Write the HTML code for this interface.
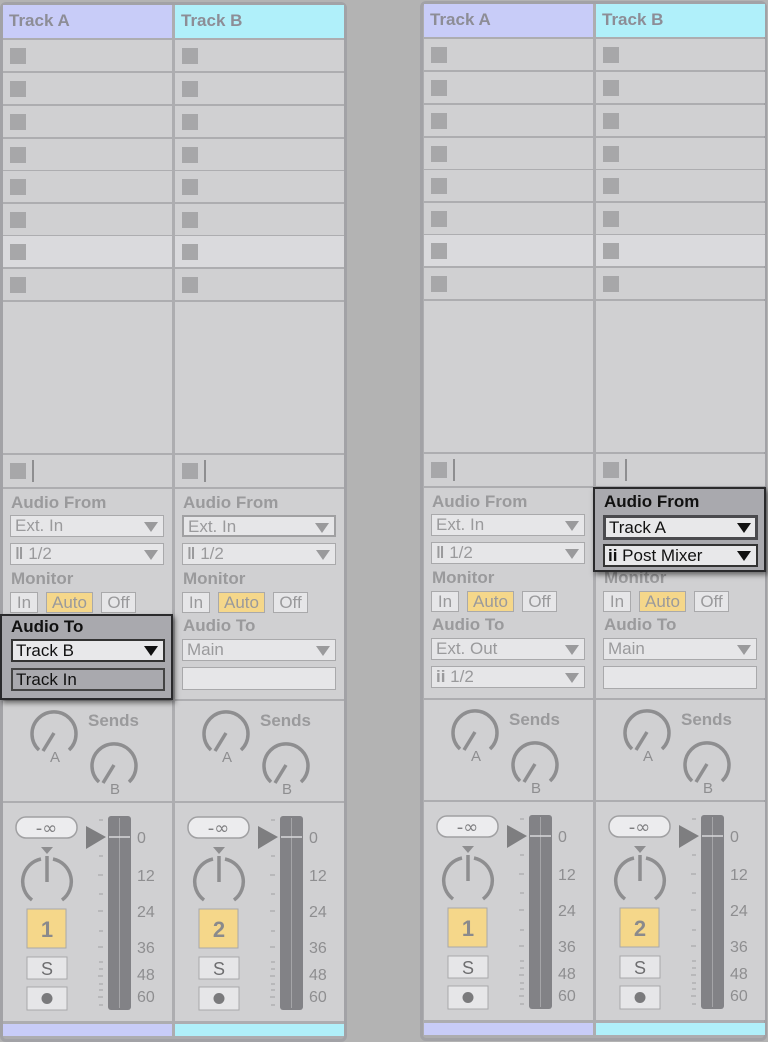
<!DOCTYPE html>
<html><head><meta charset="utf-8"><style>
*{margin:0;padding:0;box-sizing:border-box}
body{width:768px;height:1042px;background:#b3b3b3;position:relative;overflow:hidden;font-family:"Liberation Sans",sans-serif}
.panel{position:absolute;top:2px;height:1040px;width:347px;background:#adadb0;border-radius:6px;border:3px solid #a2a2a6}
.col{position:absolute;width:169px;height:1042px}
.col>div{position:absolute}
.hdr{left:0;top:5px;width:169px;height:33px;font-weight:bold;font-size:17px;color:#8d8d96;padding:6px 0 0 6px}
.cell{left:0;width:169px;background:#d0d0d2}
.sq{width:16px;height:16px;background:#a7a7a9}
.lbl{font-weight:bold;font-size:17px;color:#9a9a9c;left:8px}
.dd{left:7px;width:154px;height:22px;background:#e6e6e8;border:1px solid #a9a9ab;font-size:17px;color:#9a9a9c;padding:0 0 0 4px;line-height:20px}
.dd .ar{position:absolute;right:5px;top:6px;width:0;height:0;border-left:7px solid transparent;border-right:7px solid transparent;border-top:10px solid #9a9a9c}
.btn{top:592px;height:21px;background:#e6e6e8;border:1px solid #a9a9ab;font-size:17px;color:#9a9a9c;text-align:center;line-height:19px}
.bar{left:0;width:169px;top:1024px;height:12px}
</style></head><body>

<div class="panel" style="left:0;top:2px"></div>
<div class="panel" style="left:420px;top:1px"></div>

<div class="col" style="left:3px;top:0">
<div class="hdr" style="background:#c8ccf8">Track A</div>
<div class="cell" style="top:40px;height:31px"><div class="sq" style="position:absolute;left:7px;top:8px"></div></div>
<div class="cell" style="top:73px;height:31px"><div class="sq" style="position:absolute;left:7px;top:8px"></div></div>
<div class="cell" style="top:106px;height:31px"><div class="sq" style="position:absolute;left:7px;top:8px"></div></div>
<div class="cell" style="top:139px;height:31px"><div class="sq" style="position:absolute;left:7px;top:8px"></div></div>
<div class="cell" style="top:171px;height:31px"><div class="sq" style="position:absolute;left:7px;top:8px"></div></div>
<div class="cell" style="top:204px;height:31px"><div class="sq" style="position:absolute;left:7px;top:8px"></div></div>
<div class="cell" style="top:236px;height:31px;background:#dadadd"><div class="sq" style="position:absolute;left:7px;top:8px"></div></div>
<div class="cell" style="top:269px;height:31px"><div class="sq" style="position:absolute;left:7px;top:8px"></div></div>
<div class="cell" style="top:302px;height:151px"></div>
<div class="cell" style="top:455px;height:32px"><div class="sq" style="position:absolute;left:7px;top:8px"></div><div style="position:absolute;left:29px;top:5px;width:2px;height:22px;background:#8e8e90"></div></div>
<div class="cell" style="top:489px;height:210px"></div>
<div class="lbl" style="top:493px">Audio From</div>
<div class="dd" style="top:515px">Ext. In<span class="ar"></span></div>
<div class="dd" style="top:543px"><b>&#8214;</b> 1/2<span class="ar"></span></div>
<div class="lbl" style="top:569px">Monitor</div>
<div class="btn" style="left:7px;width:28px">In</div>
<div class="btn" style="left:43px;width:47px;background:#f5d78a">Auto</div>
<div class="btn" style="left:98px;width:35px">Off</div>
<div class="cell" style="top:701px;height:100px"></div>
<div class="cell" style="top:803px;height:218px"></div>
<div class="bar" style="background:#c8ccf8"></div>
</div>

<div class="col" style="left:175px;top:0">
<div class="hdr" style="background:#b0f0fa">Track B</div>
<div class="cell" style="top:40px;height:31px"><div class="sq" style="position:absolute;left:7px;top:8px"></div></div>
<div class="cell" style="top:73px;height:31px"><div class="sq" style="position:absolute;left:7px;top:8px"></div></div>
<div class="cell" style="top:106px;height:31px"><div class="sq" style="position:absolute;left:7px;top:8px"></div></div>
<div class="cell" style="top:139px;height:31px"><div class="sq" style="position:absolute;left:7px;top:8px"></div></div>
<div class="cell" style="top:171px;height:31px"><div class="sq" style="position:absolute;left:7px;top:8px"></div></div>
<div class="cell" style="top:204px;height:31px"><div class="sq" style="position:absolute;left:7px;top:8px"></div></div>
<div class="cell" style="top:236px;height:31px;background:#dadadd"><div class="sq" style="position:absolute;left:7px;top:8px"></div></div>
<div class="cell" style="top:269px;height:31px"><div class="sq" style="position:absolute;left:7px;top:8px"></div></div>
<div class="cell" style="top:302px;height:151px"></div>
<div class="cell" style="top:455px;height:32px"><div class="sq" style="position:absolute;left:7px;top:8px"></div><div style="position:absolute;left:29px;top:5px;width:2px;height:22px;background:#8e8e90"></div></div>
<div class="cell" style="top:489px;height:210px"></div>
<div class="lbl" style="top:493px">Audio From</div>
<div class="dd" style="top:515px;border:2px solid #a0a0a2">Ext. In<span class="ar"></span></div>
<div class="dd" style="top:543px"><b>&#8214;</b> 1/2<span class="ar"></span></div>
<div class="lbl" style="top:569px">Monitor</div>
<div class="btn" style="left:7px;width:28px">In</div>
<div class="btn" style="left:43px;width:47px;background:#f5d78a">Auto</div>
<div class="btn" style="left:98px;width:35px">Off</div>
<div class="lbl" style="top:616px">Audio To</div>
<div class="dd" style="top:639px">Main<span class="ar"></span></div>
<div class="dd" style="top:667px;height:23px"></div>
<div class="cell" style="top:701px;height:100px"></div>
<div class="cell" style="top:803px;height:218px"></div>
<div class="bar" style="background:#b0f0fa"></div>
</div>

<div class="col" style="left:424px;top:-1px">
<div class="hdr" style="background:#c8ccf8">Track A</div>
<div class="cell" style="top:40px;height:31px"><div class="sq" style="position:absolute;left:7px;top:8px"></div></div>
<div class="cell" style="top:73px;height:31px"><div class="sq" style="position:absolute;left:7px;top:8px"></div></div>
<div class="cell" style="top:106px;height:31px"><div class="sq" style="position:absolute;left:7px;top:8px"></div></div>
<div class="cell" style="top:139px;height:31px"><div class="sq" style="position:absolute;left:7px;top:8px"></div></div>
<div class="cell" style="top:171px;height:31px"><div class="sq" style="position:absolute;left:7px;top:8px"></div></div>
<div class="cell" style="top:204px;height:31px"><div class="sq" style="position:absolute;left:7px;top:8px"></div></div>
<div class="cell" style="top:236px;height:31px;background:#dadadd"><div class="sq" style="position:absolute;left:7px;top:8px"></div></div>
<div class="cell" style="top:269px;height:31px"><div class="sq" style="position:absolute;left:7px;top:8px"></div></div>
<div class="cell" style="top:302px;height:151px"></div>
<div class="cell" style="top:455px;height:32px"><div class="sq" style="position:absolute;left:7px;top:8px"></div><div style="position:absolute;left:29px;top:5px;width:2px;height:22px;background:#8e8e90"></div></div>
<div class="cell" style="top:489px;height:210px"></div>
<div class="lbl" style="top:493px">Audio From</div>
<div class="dd" style="top:515px">Ext. In<span class="ar"></span></div>
<div class="dd" style="top:543px"><b>&#8214;</b> 1/2<span class="ar"></span></div>
<div class="lbl" style="top:569px">Monitor</div>
<div class="btn" style="left:7px;width:28px">In</div>
<div class="btn" style="left:43px;width:47px;background:#f5d78a">Auto</div>
<div class="btn" style="left:98px;width:35px">Off</div>
<div class="lbl" style="top:616px">Audio To</div>
<div class="dd" style="top:639px">Ext. Out<span class="ar"></span></div>
<div class="dd" style="top:667px"><b>ii</b> 1/2<span class="ar"></span></div>
<div class="cell" style="top:701px;height:100px"></div>
<div class="cell" style="top:803px;height:218px"></div>
<div class="bar" style="background:#c8ccf8"></div>
</div>

<div class="col" style="left:596px;top:-1px">
<div class="hdr" style="background:#b0f0fa">Track B</div>
<div class="cell" style="top:40px;height:31px"><div class="sq" style="position:absolute;left:7px;top:8px"></div></div>
<div class="cell" style="top:73px;height:31px"><div class="sq" style="position:absolute;left:7px;top:8px"></div></div>
<div class="cell" style="top:106px;height:31px"><div class="sq" style="position:absolute;left:7px;top:8px"></div></div>
<div class="cell" style="top:139px;height:31px"><div class="sq" style="position:absolute;left:7px;top:8px"></div></div>
<div class="cell" style="top:171px;height:31px"><div class="sq" style="position:absolute;left:7px;top:8px"></div></div>
<div class="cell" style="top:204px;height:31px"><div class="sq" style="position:absolute;left:7px;top:8px"></div></div>
<div class="cell" style="top:236px;height:31px;background:#dadadd"><div class="sq" style="position:absolute;left:7px;top:8px"></div></div>
<div class="cell" style="top:269px;height:31px"><div class="sq" style="position:absolute;left:7px;top:8px"></div></div>
<div class="cell" style="top:302px;height:151px"></div>
<div class="cell" style="top:455px;height:32px"><div class="sq" style="position:absolute;left:7px;top:8px"></div><div style="position:absolute;left:29px;top:5px;width:2px;height:22px;background:#8e8e90"></div></div>
<div class="cell" style="top:489px;height:210px"></div>
<div class="lbl" style="top:569px">Monitor</div>
<div class="btn" style="left:7px;width:28px">In</div>
<div class="btn" style="left:43px;width:47px;background:#f5d78a">Auto</div>
<div class="btn" style="left:98px;width:35px">Off</div>
<div class="lbl" style="top:616px">Audio To</div>
<div class="dd" style="top:639px">Main<span class="ar"></span></div>
<div class="dd" style="top:667px;height:23px"></div>
<div class="cell" style="top:701px;height:100px"></div>
<div class="cell" style="top:803px;height:218px"></div>
<div class="bar" style="background:#b0f0fa"></div>
</div>

<svg width="768" height="1042" style="position:absolute;left:0;top:0" xmlns="http://www.w3.org/2000/svg">
<defs>
<g id="mix">
 <path d="M36,750 A22,22 0 1 1 66,750" fill="none" stroke="#8e8e90" stroke-width="3.5"/>
 <line x1="51" y1="733" x2="40" y2="751" stroke="#8e8e90" stroke-width="3.5"/>
 <text x="47" y="762" font-size="15" fill="#8e8e90" font-family="Liberation Sans">A</text>
 <text x="85" y="726" font-size="17" font-weight="bold" fill="#9a9a9c" font-family="Liberation Sans">Sends</text>
 <path d="M96,782 A22,22 0 1 1 126,782" fill="none" stroke="#8e8e90" stroke-width="3.5"/>
 <line x1="111" y1="765" x2="100" y2="783" stroke="#8e8e90" stroke-width="3.5"/>
 <text x="107" y="794" font-size="15" fill="#8e8e90" font-family="Liberation Sans">B</text>
 <rect x="13" y="817" width="61" height="21" rx="10" fill="#ececee" stroke="#a0a0a2" stroke-width="1.5"/>
 <text x="43.5" y="834" font-size="18" fill="#7e7e80" text-anchor="middle" font-family="DejaVu Sans">-∞</text>
 <path d="M38,847 L50,847 L44,854 Z" fill="#8e8e90"/>
 <path d="M29,900 A23,23 0 0 1 38,859 M50,859 A23,23 0 0 1 59,900" fill="none" stroke="#8e8e90" stroke-width="3.5"/>
 <line x1="44" y1="856" x2="44" y2="882" stroke="#8e8e90" stroke-width="3.5"/>
 <rect x="24" y="909" width="39" height="39" fill="#f5d78a" stroke="#a9a9ab"/>
 <rect x="24" y="957" width="40" height="22" fill="#e6e6e8" stroke="#a9a9ab"/>
 <text x="44" y="975" font-size="18" fill="#6e6e70" text-anchor="middle" font-family="Liberation Sans">S</text>
 <rect x="24" y="987" width="40" height="23" fill="#e6e6e8" stroke="#a9a9ab"/>
 <circle cx="44" cy="998.5" r="5.5" fill="#7a7a7c"/>
 <path d="M83,826 L103,837 L83,849 Z" fill="#7e7e80"/>
 <rect x="105" y="816" width="23" height="194" rx="3" fill="#828286"/>
 <line x1="116.5" y1="818" x2="116.5" y2="1008" stroke="#a5a5a8" stroke-width="1"/>
 <line x1="106" y1="837" x2="127" y2="837" stroke="#d8d8da" stroke-width="1.5"/>
 <g stroke="#a0a0a2" stroke-width="1">
  <line x1="96" y1="820" x2="100" y2="820"/><line x1="96" y1="856" x2="100" y2="856"/>
  <line x1="95" y1="875" x2="100" y2="875"/><line x1="96" y1="894" x2="100" y2="894"/>
  <line x1="95" y1="911" x2="100" y2="911"/><line x1="96" y1="931" x2="100" y2="931"/>
  <line x1="95" y1="947" x2="100" y2="947"/><line x1="96" y1="962" x2="100" y2="962"/>
  <line x1="96" y1="969" x2="100" y2="969"/><line x1="95" y1="976" x2="100" y2="976"/>
  <line x1="96" y1="984" x2="100" y2="984"/><line x1="96" y1="990" x2="100" y2="990"/>
  <line x1="95" y1="997" x2="100" y2="997"/><line x1="96" y1="1005" x2="100" y2="1005"/>
 </g>
 <g font-size="16" fill="#8e8e90" font-family="Liberation Sans">
  <text x="134" y="843">0</text><text x="134" y="881">12</text><text x="134" y="917">24</text>
  <text x="134" y="953">36</text><text x="134" y="980">48</text><text x="134" y="1002">60</text>
 </g>
</g>
</defs>
<use href="#mix" x="3" y="0"/>
<use href="#mix" x="175" y="0"/>
<use href="#mix" x="424" y="-1"/>
<use href="#mix" x="596" y="-1"/>
<g font-size="22" fill="#8a8a8c" text-anchor="middle" font-family="Liberation Sans" font-weight="bold">
 <text x="47" y="937">1</text><text x="219" y="937">2</text><text x="468" y="936">1</text><text x="640" y="936">2</text>
</g>
</svg>

<div style="position:absolute;left:0;top:614px;width:173px;height:86px;background:#a9a9ae;border:2px solid #2a2a2c;box-shadow:2px 3px 5px rgba(0,0,0,.5)">
 <div style="position:absolute;left:9px;top:1px;font-weight:bold;font-size:17px;color:#111">Audio To</div>
 <div style="position:absolute;left:9px;top:23px;width:154px;height:23px;background:#e8e8ea;border:2px solid #333;font-size:17px;color:#111;padding:0 0 0 3px;line-height:19px">Track B<span style="position:absolute;right:5px;top:5px;border-left:7px solid transparent;border-right:7px solid transparent;border-top:10px solid #111"></span></div>
 <div style="position:absolute;left:9px;top:52px;width:154px;height:23px;background:#a9a9ae;border:2px solid #444;font-size:17px;color:#111;padding:0 0 0 3px;line-height:19px">Track In</div>
</div>

<div style="position:absolute;left:593px;top:487px;width:173px;height:85px;background:#a9a9ae;border:2px solid #2a2a2c;box-shadow:2px 3px 5px rgba(0,0,0,.5)">
 <div style="position:absolute;left:9px;top:3px;font-weight:bold;font-size:17px;color:#111">Audio From</div>
 <div style="position:absolute;left:8px;top:26px;width:155px;height:25px;background:#e8e8ea;border:3px solid #4a4a4e;font-size:17px;color:#111;padding:0 0 0 3px;line-height:19px">Track A<span style="position:absolute;right:4px;top:5px;border-left:7px solid transparent;border-right:7px solid transparent;border-top:10px solid #111"></span></div>
 <div style="position:absolute;left:8px;top:55px;width:155px;height:23px;background:#e8e8ea;border:2px solid #333;font-size:17px;color:#111;padding:0 0 0 3px;line-height:19px"><b>ii</b> Post Mixer<span style="position:absolute;right:5px;top:5px;border-left:7px solid transparent;border-right:7px solid transparent;border-top:10px solid #111"></span></div>
</div>
</body></html>
